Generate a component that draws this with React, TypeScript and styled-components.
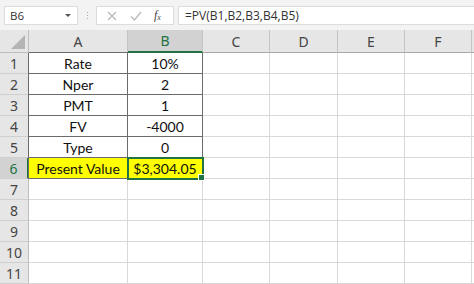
import React from "react";
import styled, { createGlobalStyle } from "styled-components";

const GlobalStyle = createGlobalStyle`
  html, body {
    margin: 0;
    padding: 0;
    background: #ffffff;
    overflow: hidden;
  }
  * { box-sizing: border-box; }
`;

const GREEN = "#217346";
const GRID = "#d8d8d8";
const TABLE = "#6b6b6b";

const columns = [
  { key: "A", width: 99 },
  { key: "B", width: 75 },
  { key: "C", width: 67 },
  { key: "D", width: 68 },
  { key: "E", width: 67 },
  { key: "F", width: 67 },
];

const rows: { label: string; value: string }[] = [
  { label: "Rate", value: "10%" },
  { label: "Nper", value: "2" },
  { label: "PMT", value: "1" },
  { label: "FV", value: "-4000" },
  { label: "Type", value: "0" },
  { label: "Present Value", value: "$3,304.05" },
];

const TOTAL_ROWS = 11;
const SELECTED_ROW = 6;
const SELECTED_COL = "B";

const Page = styled.div`
  width: 474px;
  height: 284px;
  display: flex;
  flex-direction: column;
  background: #ffffff;
`;

const Toolbar = styled.div`
  height: 30px;
  flex: none;
  display: flex;
  align-items: center;
  padding: 1px 0 0 4px;
  background: #f3f3f3;
  font-family: "Open Sans", "Liberation Sans", sans-serif;
`;

const Field = styled.div<{ $width?: number }>`
  height: 19px;
  background: #ffffff;
  border: 1px solid #dcdcdc;
  display: flex;
  align-items: center;
  ${(p) => (p.$width ? `width: ${p.$width}px; flex: none;` : "flex: 1;")}
`;

const NameText = styled.span`
  flex: 1;
  padding-left: 5px;
  font-size: 11.5px;
  color: #333;
`;

const DropArrow = styled.span`
  width: 0;
  height: 0;
  margin-right: 6px;
  border-left: 3px solid transparent;
  border-right: 3px solid transparent;
  border-top: 3px solid #555;
`;

const Grip = styled.div`
  width: 18px;
  flex: none;
  display: flex;
  flex-direction: column;
  align-items: center;
  gap: 2px;
  span {
    width: 1px;
    height: 1px;
    background: #a8a8a8;
  }
`;

const EditButtons = styled(Field)`
  justify-content: space-around;
  padding: 0 6px 0 4px;
`;

const Formula = styled(Field)`
  margin-left: 4px;
  border-right: none;
  padding-left: 6px;
  font-size: 12px;
  color: #333;
`;

const Sheet = styled.div`
  flex: 1;
  display: grid;
  grid-template-columns: 29px ${columns.map((c) => `${c.width}px`).join(" ")} 1fr;
  grid-template-rows: 23px repeat(${TOTAL_ROWS}, 21px);
  align-content: start;
  font-family: "Lato", "Liberation Sans", sans-serif;
`;

const Corner = styled.div`
  position: relative;
  background: #e6e6e6;
  border-right: 1px solid #bdbdbd;
  border-bottom: 1px solid #bdbdbd;
  &::after {
    content: "";
    position: absolute;
    right: 3px;
    bottom: 3px;
    border-left: 14px solid transparent;
    border-bottom: 14px solid #b4b4b4;
  }
`;

const ColHeader = styled.div<{ $active?: boolean }>`
  display: flex;
  align-items: center;
  justify-content: center;
  font-family: "Noto Sans", "Open Sans", sans-serif;
  font-size: 14px;
  color: ${(p) => (p.$active ? GREEN : "#444")};
  background: ${(p) => (p.$active ? "#d2d2d2" : "#e6e6e6")};
  border-right: 1px solid #c4c4c4;
  border-bottom: ${(p) => (p.$active ? `2px solid ${GREEN}` : "1px solid #a8a8a8")};
`;

const RowHeader = styled.div<{ $active?: boolean }>`
  display: flex;
  align-items: center;
  justify-content: center;
  font-family: "Noto Sans", "Open Sans", sans-serif;
  font-size: 14px;
  color: ${(p) => (p.$active ? GREEN : "#444")};
  background: ${(p) => (p.$active ? "#d2d2d2" : "#e6e6e6")};
  border-right: ${(p) => (p.$active ? `2px solid ${GREEN}` : "1px solid #bdbdbd")};
  border-bottom: 1px solid #cfcfcf;
`;

const Cell = styled.div<{ $table?: boolean; $fill?: boolean; $first?: boolean; $top?: boolean }>`
  display: flex;
  align-items: center;
  justify-content: center;
  font-size: 14px;
  color: #111;
  background: ${(p) => (p.$fill ? "#ffff00" : "#ffffff")};
  border-right: 1px solid ${(p) => (p.$table ? TABLE : GRID)};
  border-bottom: 1px solid ${(p) => (p.$table ? TABLE : GRID)};
  ${(p) => (p.$first ? `border-left: 1px solid ${TABLE}; margin-left: -1px;` : "")}
  ${(p) => (p.$top ? `border-top: 1px solid ${TABLE}; margin-top: -1px;` : "")}
`;

const Selected = styled(Cell)`
  position: relative;
  outline: 2px solid ${GREEN};
  outline-offset: -1px;
  &::after {
    content: "";
    position: absolute;
    right: -3px;
    bottom: -3px;
    width: 5px;
    height: 5px;
    background: ${GREEN};
    border: 1px solid #fff;
  }
`;

const Filler = styled.div<{ $head?: boolean }>`
  background: ${(p) => (p.$head ? "#e6e6e6" : "#ffffff")};
  border-bottom: 1px solid ${(p) => (p.$head ? "#a8a8a8" : GRID)};
`;

const Cancel = () => (
  <svg width="10" height="10" viewBox="0 0 10 10">
    <path d="M1 1 L9 9 M9 1 L1 9" stroke="#b9b9b9" strokeWidth="1.2" fill="none" />
  </svg>
);

const Check = () => (
  <svg width="12" height="10" viewBox="0 0 12 10">
    <path d="M1 5.5 L4.5 9 L11 1" stroke="#b9b9b9" strokeWidth="1.2" fill="none" />
  </svg>
);

const Fx = styled.span`
  font-family: "Liberation Serif", serif;
  font-style: italic;
  font-size: 12px;
  color: #444;
  sub {
    font-size: 8px;
    vertical-align: -1px;
  }
`;

export default function App() {
  return (
    <Page>
      <GlobalStyle />
      <Toolbar>
        <Field $width={74}>
          <NameText>B6</NameText>
          <DropArrow />
        </Field>
        <Grip>
          <span />
          <span />
          <span />
        </Grip>
        <EditButtons $width={78}>
          <Cancel />
          <Check />
          <Fx>
            f<sub>x</sub>
          </Fx>
        </EditButtons>
        <Formula>=PV(B1,B2,B3,B4,B5)</Formula>
      </Toolbar>
      <Sheet>
        <Corner />
        {columns.map((c) => (
          <ColHeader key={c.key} $active={c.key === SELECTED_COL}>
            {c.key}
          </ColHeader>
        ))}
        <Filler $head />
        {Array.from({ length: TOTAL_ROWS }, (_, i) => {
          const n = i + 1;
          const data = rows[i];
          return (
            <React.Fragment key={n}>
              <RowHeader $active={n === SELECTED_ROW}>{n}</RowHeader>
              {columns.map((c) => {
                if (data && c.key === "A")
                  return (
                    <Cell key={c.key} $table $first $top={n === 1} $fill={n === 6}>
                      {data.label}
                    </Cell>
                  );
                if (data && c.key === "B") {
                  const Comp = n === SELECTED_ROW ? Selected : Cell;
                  return (
                    <Comp key={c.key} $table $fill={n === 6}>
                      {data.value}
                    </Comp>
                  );
                }
                return <Cell key={c.key} />;
              })}
              <Filler />
            </React.Fragment>
          );
        })}
      </Sheet>
    </Page>
  );
}
